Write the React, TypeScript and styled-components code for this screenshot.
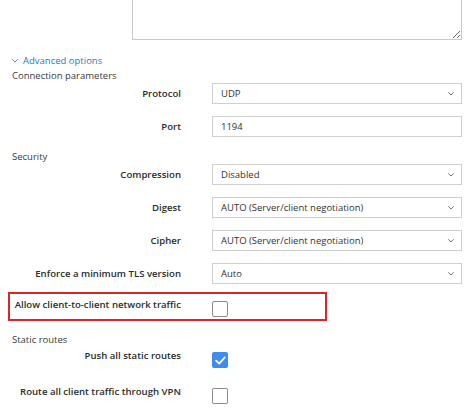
import React from 'react';
import styled, { createGlobalStyle } from 'styled-components';

const GlobalStyle = createGlobalStyle`
  html, body {
    margin: 0;
    padding: 0;
    background: #ffffff;
  }
  body {
    font-family: "Open Sans", "Liberation Sans", sans-serif;
    color: #333333;
    overflow: hidden;
  }
`;

const Page = styled.div`
  display: flex;
  flex-direction: column;
  padding: 0 12px;
  width: 474px;
  height: 413px;
  box-sizing: border-box;
  overflow: hidden;
`;

const NotesArea = styled.textarea`
  margin: -20px 0 0 120px;
  height: 60px;
  box-sizing: border-box;
  border: 1px solid #c9c9c9;
  border-radius: 0;
  resize: vertical;
  font-family: inherit;
`;

const AdvancedToggle = styled.div`
  display: flex;
  align-items: center;
  gap: 5px;
  margin-top: 13px;
  font-size: 9.5px;
  line-height: 15px;
  color: #2f78b7;
  cursor: pointer;
`;

const Fields = styled.div`
  display: flex;
  flex-direction: column;
  gap: 12px;
`;

const SectionTitle = styled.div`
  font-size: 9.5px;
  line-height: 15px;
  color: #3a3a3a;
`;

const Row = styled.div<{ $check?: boolean; $highlight?: boolean }>`
  position: relative;
  display: flex;
  align-items: ${({ $check }) => ($check ? 'flex-start' : 'center')};
  height: ${({ $check }) => ($check ? '24px' : '21px')};

  ${({ $highlight }) =>
    $highlight &&
    `
    &::after {
      content: '';
      position: absolute;
      left: -4px;
      top: -4px;
      width: 319px;
      height: 29px;
      box-sizing: border-box;
      border: 2px solid #d8262d;
      pointer-events: none;
    }
  `}
`;

const Label = styled.div`
  width: 169px;
  flex-shrink: 0;
  margin-right: 31px;
  display: flex;
  justify-content: flex-end;
  font-size: 9.6px;
  font-weight: 600;
  line-height: 18px;
  color: #2b2b2b;
  white-space: nowrap;
`;

const SelectBox = styled.div`
  flex: 1;
  height: 21px;
  box-sizing: border-box;
  display: flex;
  align-items: center;
  justify-content: space-between;
  padding: 0 7px 0 8px;
  border: 1px solid #cfcfcf;
  background: #ffffff;
  font-size: 9.5px;
  color: #333333;
`;

const TextBox = styled.input`
  flex: 1;
  height: 21px;
  box-sizing: border-box;
  padding: 0 8px;
  border: 1px solid #cfcfcf;
  border-radius: 0;
  font-family: inherit;
  font-size: 9.5px;
  color: #333333;
  outline: none;
`;

const Box = styled.span<{ $checked?: boolean }>`
  margin-top: 5px;
  width: 16px;
  height: 16px;
  box-sizing: border-box;
  border-radius: 2px;
  display: flex;
  align-items: center;
  justify-content: center;
  border: ${({ $checked }) => ($checked ? 'none' : '1.5px solid #8b8b8b')};
  background: ${({ $checked }) => ($checked ? '#3f8cef' : '#ffffff')};
`;

const Chevron = ({ color = '#555', size = 6 }: { color?: string; size?: number }) => (
  <svg width={size} height={size * 0.6} viewBox="0 0 10 6" fill="none">
    <path d="M1 1l4 4 4-4" stroke={color} strokeWidth="1.4" strokeLinecap="round" strokeLinejoin="round" />
  </svg>
);

const Select = ({ value }: { value: string }) => (
  <SelectBox>
    <span>{value}</span>
    <Chevron />
  </SelectBox>
);

const Checkbox = ({ checked }: { checked?: boolean }) => (
  <Box $checked={checked}>
    {checked && (
      <svg width="11" height="9" viewBox="0 0 11 9" fill="none">
        <path d="M1.2 4.6l3 3 5.6-6.2" stroke="#fff" strokeWidth="1.8" strokeLinecap="round" strokeLinejoin="round" />
      </svg>
    )}
  </Box>
);

const App = () => {
  return (
    <>
      <GlobalStyle />
      <Page>
        <NotesArea />
        <AdvancedToggle>
          <Chevron color="#2f78b7" size={6} />
          Advanced options
        </AdvancedToggle>
        <Fields>
          <div>
            <SectionTitle>Connection parameters</SectionTitle>
            <Row>
              <Label>Protocol</Label>
              <Select value="UDP" />
            </Row>
          </div>
          <Row>
            <Label>Port</Label>
            <TextBox defaultValue="1194" />
          </Row>
          <div>
            <SectionTitle>Security</SectionTitle>
            <Row>
              <Label>Compression</Label>
              <Select value="Disabled" />
            </Row>
          </div>
          <Row>
            <Label>Digest</Label>
            <Select value="AUTO (Server/client negotiation)" />
          </Row>
          <Row>
            <Label>Cipher</Label>
            <Select value="AUTO (Server/client negotiation)" />
          </Row>
          <Row>
            <Label>Enforce a minimum TLS version</Label>
            <Select value="Auto" />
          </Row>
          <Row $check $highlight>
            <Label>Allow client-to-client network traffic</Label>
            <Checkbox />
          </Row>
          <div>
            <SectionTitle>Static routes</SectionTitle>
            <Row $check>
              <Label>Push all static routes</Label>
              <Checkbox checked />
            </Row>
          </div>
          <Row $check>
            <Label>Route all client traffic through VPN</Label>
            <Checkbox />
          </Row>
        </Fields>
      </Page>
    </>
  );
};

export default App;
